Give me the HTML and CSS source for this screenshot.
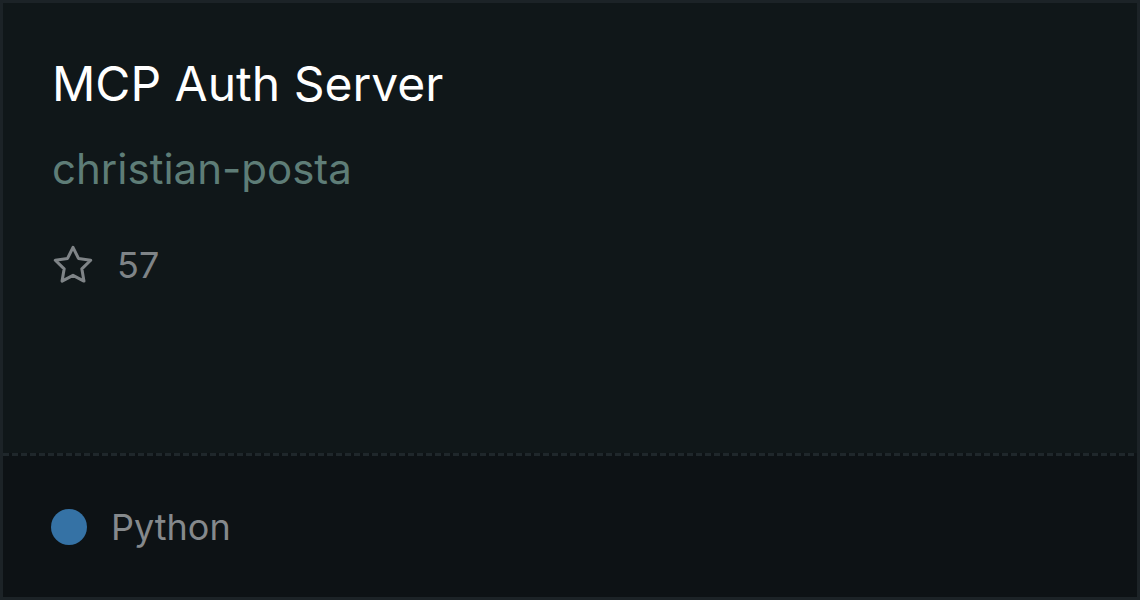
FILE: index.html
```html
<!DOCTYPE html>
<html lang="en">

<head>
    <meta charset="UTF-8">
    <meta name="viewport" content="width=device-width, initial-scale=1.0">
    <title>MCP Auth Server</title>
    <link rel="stylesheet" href="styles.css">
</head>

<body>
    <div class="card">
        <div class="card-main">
            <h1 class="title">MCP Auth Server</h1>
            <div class="owner">christian-posta</div>
            <div class="stars">
                <svg class="star" viewBox="0 0 24 24" fill="none" stroke="currentColor" stroke-width="1.6" stroke-linejoin="round">
                    <path d="M12 2.8l2.85 5.78 6.38.93-4.62 4.5 1.09 6.35L12 17.36l-5.7 3 1.09-6.35-4.62-4.5 6.38-.93z"/>
                </svg>
                <span>57</span>
            </div>
        </div>
        <div class="card-foot">
            <span class="lang-dot"></span>
            <span class="lang">Python</span>
        </div>
    </div>
</body>

</html>
```

FILE: styles.css
```css
* {
    margin: 0;
    padding: 0;
    box-sizing: border-box;
}
body {
    background-color: #101719;
    font-family: Inter, "Noto Sans", sans-serif;
}
.card {
    display: flex;
    flex-direction: column;
    height: 600px;
    border: 3px solid #1c2327;
    background-color: #101719;
}
.card-main {
    flex: 1;
    padding: 51px 49px 0;
}
.title {
    font-size: 48px;
    font-weight: 400;
    line-height: 60px;
    color: #ffffff;
}
.owner {
    margin-top: 30px;
    font-size: 42px;
    line-height: 50px;
    color: #5e7d77;
}
.stars {
    display: flex;
    align-items: center;
    gap: 21px;
    margin-top: 48px;
    font-size: 36px;
    line-height: 46px;
    color: #7f8487;
}
.star {
    width: 46px;
    height: 46px;
    margin-left: -2px;
}
/* dashed divider drawn as a gradient so the dash length matches */
.card-foot {
    display: flex;
    align-items: center;
    gap: 24px;
    height: 144px;
    padding: 3px 0 0 48px;
    background: repeating-linear-gradient(90deg, #1f272b 0 6px, transparent 6px 9px) top left / 100% 3px no-repeat, #0d1215;
}
.lang-dot {
    width: 36px;
    height: 36px;
    border-radius: 50%;
    background-color: #3572a5;
}
.lang {
    font-size: 36px;
    color: #85898c;
}
```
